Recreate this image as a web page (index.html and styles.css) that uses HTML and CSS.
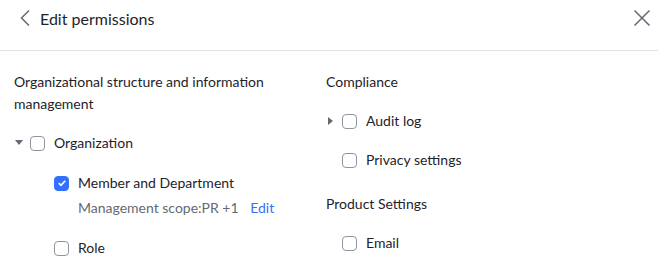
FILE: index.html
```html
<!DOCTYPE html>
<html lang="en">
<head>
    <meta charset="UTF-8">
    <meta name="viewport" content="width=device-width, initial-scale=1.0">
    <title>Edit permissions</title>
    <link rel="stylesheet" href="styles.css">
</head>
<body>
    <div class="panel">
        <div class="panel-header">
            <div class="header-title">
                <svg class="icon-back" width="12" height="18" viewBox="0 0 12 18">
                    <path d="M10 1.5 L2.5 9 L10 16.5" fill="none" stroke="#646a73" stroke-width="1.5"/>
                </svg>
                <span>Edit permissions</span>
            </div>
            <svg class="icon-close" width="18" height="18" viewBox="0 0 18 18">
                <path d="M1.5 1.5 L16.5 16.5 M16.5 1.5 L1.5 16.5" fill="none" stroke="#646a73" stroke-width="1.5"/>
            </svg>
        </div>

        <div class="panel-body">
            <div class="column">
                <div class="section-title">Organizational structure and information management</div>

                <div class="tree-row">
                    <span class="switcher open"></span>
                    <span class="checkbox"></span>
                    <span class="label">Organization</span>
                </div>

                <div class="tree-children">
                    <div class="tree-row child">
                        <span class="checkbox checked">
                            <svg width="10" height="10" viewBox="0 0 10 10">
                                <path d="M1.8 5.2 L4 7.3 L8.2 2.8" fill="none" stroke="#fff" stroke-width="1.6"/>
                            </svg>
                        </span>
                        <span class="label">Member and Department</span>
                    </div>
                    <div class="scope">
                        <span>Management scope:PR +1</span>
                        <a class="edit-link" href="#">Edit</a>
                    </div>
                    <div class="tree-row child">
                        <span class="checkbox"></span>
                        <span class="label">Role</span>
                    </div>
                </div>
            </div>

            <div class="column">
                <div class="section-title">Compliance</div>
                <div class="tree-row">
                    <span class="switcher closed"></span>
                    <span class="checkbox"></span>
                    <span class="label">Audit log</span>
                </div>
                <div class="tree-row">
                    <span class="switcher"></span>
                    <span class="checkbox"></span>
                    <span class="label">Privacy settings</span>
                </div>

                <div class="section-title spaced">Product Settings</div>
                <div class="tree-row">
                    <span class="switcher"></span>
                    <span class="checkbox"></span>
                    <span class="label">Email</span>
                </div>
            </div>
        </div>
    </div>
</body>
</html>
```

FILE: styles.css
```css
body {
    margin: 0;
    font-family: Lato, "Liberation Sans", sans-serif;
    font-size: 14px;
    color: #1f2329;
    background-color: #fff;
}

.panel {
    width: 658px;
    height: 263px;
    overflow: hidden;
}

.panel-header {
    height: 36px;
    display: flex;
    align-items: center;
    justify-content: space-between;
    padding: 0 7px 14px 19px;
    border-bottom: 1px solid #dee0e3;
}

.header-title {
    display: flex;
    align-items: center;
    gap: 9px;
    font-size: 16px;
    color: #1f2329;
}

.icon-back,
.icon-close {
    display: block;
}

.panel-body {
    display: grid;
    grid-template-columns: 296px 1fr;
    column-gap: 16px;
    padding: 20px 14px 0;
}

.section-title {
    line-height: 22px;
    color: #1f2329;
}

.section-title.spaced {
    margin-top: 22px;
}

.tree-row {
    display: flex;
    align-items: center;
    height: 22px;
    margin-top: 17px;
}

.tree-row.child {
    margin-top: 18px;
}

.tree-children {
    padding-left: 40px;
}

.switcher {
    width: 16px;
    height: 16px;
    position: relative;
    flex-shrink: 0;
}

.switcher.open::before {
    content: "";
    position: absolute;
    left: 1px;
    top: 5px;
    border-left: 4px solid transparent;
    border-right: 4px solid transparent;
    border-top: 5px solid #646a73;
}

.switcher.closed::before {
    content: "";
    position: absolute;
    left: 2px;
    top: 4px;
    border-top: 4px solid transparent;
    border-bottom: 4px solid transparent;
    border-left: 5px solid #646a73;
}

.checkbox {
    width: 15px;
    height: 15px;
    box-sizing: border-box;
    border: 1px solid #8f959e;
    border-radius: 4px;
    flex-shrink: 0;
    display: flex;
    align-items: center;
    justify-content: center;
}

.checkbox.checked {
    background-color: #3370ff;
    border-color: #3370ff;
}

.label {
    margin-left: 9px;
    line-height: 22px;
}

.scope {
    margin: 3px 0 0 24px;
    line-height: 22px;
    color: #646a73;
}

.edit-link {
    color: #3370ff;
    text-decoration: none;
    margin-left: 8px;
}
```
